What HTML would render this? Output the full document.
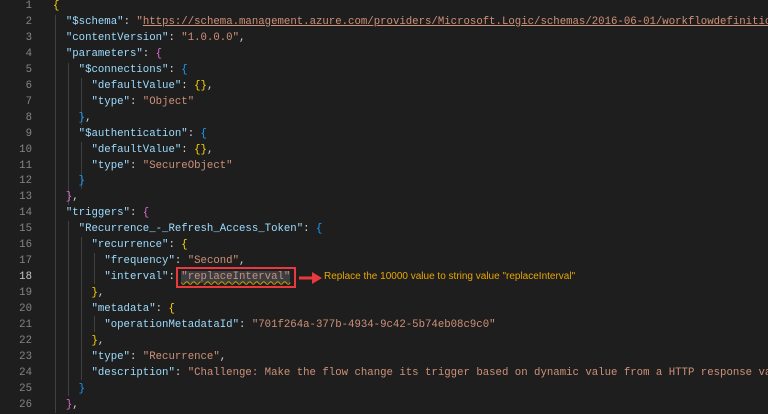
<!DOCTYPE html>
<html><head><style>
body{margin:0;width:768px;height:413px;background:#1e1e1e;overflow:hidden;position:relative;font-family:"Liberation Mono",monospace;font-size:10.7px}
.ln{position:absolute;left:0;width:32px;text-align:right;color:#858585;line-height:15.95px}
.code{position:absolute;left:53px;top:-1px;width:715px;overflow:hidden;white-space:pre;line-height:15.95px;color:#d4d4d4}
.k{color:#9cdcfe}.s{color:#ce9178}.y{color:#ffd700}.p{color:#da70d6}.b{color:#179fff}
.u{text-decoration:underline;text-decoration-color:#ce9178}
.g{position:absolute;width:1px;background:#404040}
</style></head><body>
<div class="ln" style="top:-1px">1<br>2<br>3<br>4<br>5<br>6<br>7<br>8<br>9<br>10<br>11<br>12<br>13<br>14<br>15<br>16<br>17<br><span style="color:#c6c6c6">18</span><br>19<br>20<br>21<br>22<br>23<br>24<br>25<br>26</div>
<div class="g" style="left:55px;top:15px;height:398px"></div>
<div class="g" style="left:68px;top:63px;height:142px"></div>
<div class="g" style="left:81px;top:78px;height:47px"></div>
<div class="g" style="left:81px;top:142px;height:47px"></div>
<div class="g" style="left:68px;top:221px;height:175px"></div>
<div class="g" style="left:81px;top:237px;height:143px"></div>
<div class="g" style="left:94px;top:253px;height:31px"></div>
<div class="g" style="left:94px;top:316px;height:16px"></div>
<div class="code"><span class="y">{</span>
  <span class="k">"$schema"</span>: <span class="s">"<span class="u">https://schema.management.azure.com/providers/Microsoft.Logic/schemas/2016-06-01/workflowdefinition.json#</span>"</span>,
  <span class="k">"contentVersion"</span>: <span class="s">"1.0.0.0"</span>,
  <span class="k">"parameters"</span>: <span class="p">{</span>
    <span class="k">"$connections"</span>: <span class="b">{</span>
      <span class="k">"defaultValue"</span>: <span class="y">{}</span>,
      <span class="k">"type"</span>: <span class="s">"Object"</span>
    <span class="b">}</span>,
    <span class="k">"$authentication"</span>: <span class="b">{</span>
      <span class="k">"defaultValue"</span>: <span class="y">{}</span>,
      <span class="k">"type"</span>: <span class="s">"SecureObject"</span>
    <span class="b">}</span>
  <span class="p">}</span>,
  <span class="k">"triggers"</span>: <span class="p">{</span>
    <span class="k">"Recurrence_-_Refresh_Access_Token"</span>: <span class="b">{</span>
      <span class="k">"recurrence"</span>: <span class="y">{</span>
        <span class="k">"frequency"</span>: <span class="s">"Second"</span>,
        <span class="k">"interval"</span>: <span class="s" style="background:#3a3d41;text-decoration:underline wavy #b89500">"replaceInterval"</span>
      <span class="y">}</span>,
      <span class="k">"metadata"</span>: <span class="y">{</span>
        <span class="k">"operationMetadataId"</span>: <span class="s">"701f264a-377b-4934-9c42-5b74eb08c9c0"</span>
      <span class="y">}</span>,
      <span class="k">"type"</span>: <span class="s">"Recurrence"</span>,
      <span class="k">"description"</span>: <span class="s">"Challenge: Make the flow change its trigger based on dynamic value from a HTTP response value"</span>
    <span class="b">}</span>
  <span class="p">}</span>,</div>
<div style="position:absolute;left:176px;top:267px;width:120px;height:21px;border:2px solid #e8393f;box-sizing:border-box"></div>
<svg style="position:absolute;left:299px;top:272px" width="24" height="12"><rect x="0" y="4.5" width="15" height="3" fill="#e8393f"/><path d="M13 0 L23 6 L13 12Z" fill="#e8393f"/></svg>
<div style="position:absolute;left:324px;top:271px;font-family:'Liberation Sans',sans-serif;font-size:10px;color:#e8a600;white-space:nowrap">Replace the 10000 value to string value "replaceInterval"</div>
</body></html>
